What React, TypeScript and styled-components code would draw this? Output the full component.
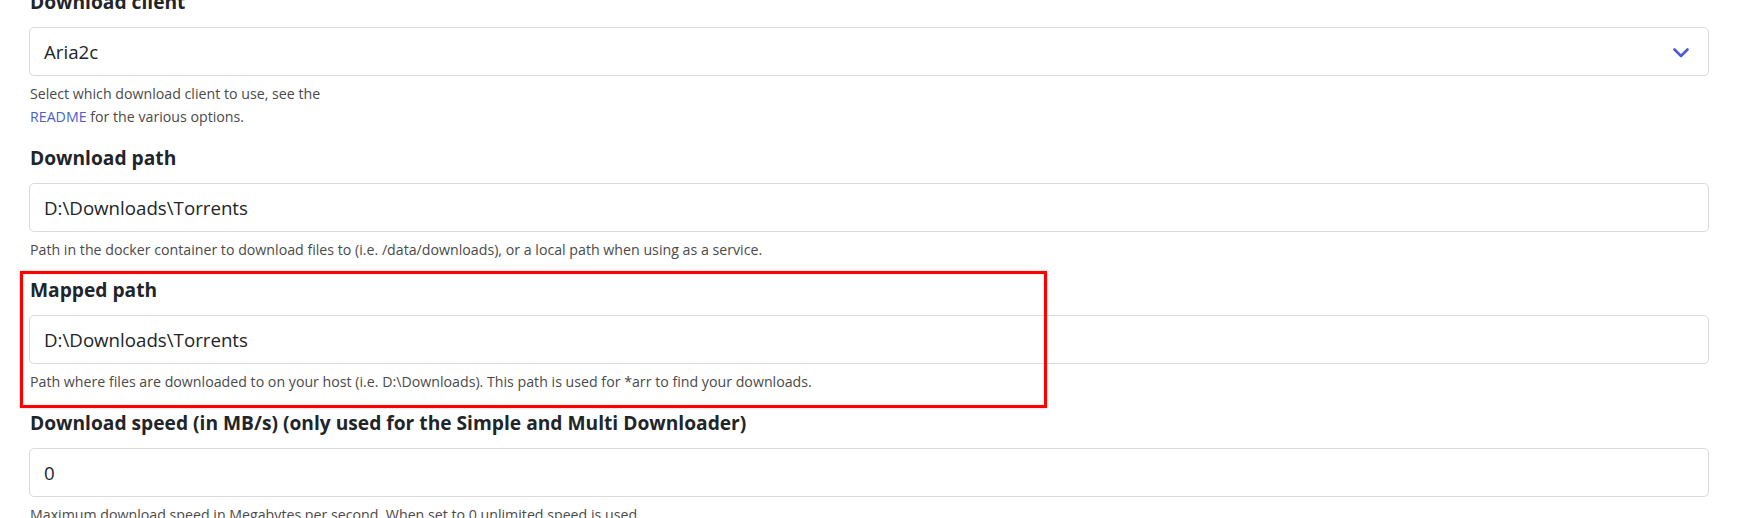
import React from "react";
import styled, { createGlobalStyle } from "styled-components";

const Global = createGlobalStyle`
  html, body {
    margin: 0;
    padding: 0;
    background: #ffffff;
  }
  body {
    font-family: "Open Sans", "Noto Sans", "Liberation Sans", sans-serif;
    color: #212529;
    -webkit-font-smoothing: antialiased;
  }
`;

const Page = styled.div`
  margin-top: -10px;
  padding: 0 37px 0 29px;
`;

const Group = styled.div`
  position: relative;
  margin-bottom: 17.5px;
`;

const Label = styled.label`
  display: block;
  font-weight: 700;
  font-size: 19.2px;
  line-height: 24px;
  margin: 0 0 13px 1px;
  color: #212529;
`;

const FieldBox = styled.div`
  position: relative;
  box-sizing: border-box;
  height: 49px;
  border: 1px solid #dadada;
  border-radius: 5px;
  background: #ffffff;
  display: flex;
  align-items: center;
  padding: 0 14px;
`;

const Value = styled.span`
  flex: 1;
  font-size: 18.7px;
  color: #212529;
  white-space: nowrap;
`;

const Chevron = styled.svg`
  width: 16px;
  height: 10px;
  margin-right: 5px;
  margin-top: 2px;
  flex: none;
`;

const Help = styled.div`
  margin-top: 6px;
  font-size: 14.2px;
  line-height: 23px;
  color: #4a4a4a;
  padding-left: 1px;
`;

const Link = styled.a`
  color: #4a5fc8;
  text-decoration: none;
`;

const Highlight = styled.div`
  position: absolute;
  left: -9px;
  top: -7.5px;
  width: 1027px;
  height: 137px;
  box-sizing: border-box;
  border: 3px solid #ff0000;
  box-shadow: 0 0 1px rgba(255, 0, 0, 0.6), inset 0 0 1px rgba(255, 0, 0, 0.6);
  pointer-events: none;
`;

type FieldProps = {
  label: string;
  value: string;
  select?: boolean;
  highlight?: boolean;
  children: React.ReactNode;
};

function Field({ label, value, select, highlight, children }: FieldProps) {
  return (
    <Group>
      <Label>{label}</Label>
      <FieldBox>
        <Value>{value}</Value>
        {select && (
          <Chevron viewBox="0 0 16 10" aria-hidden="true">
            <polyline
              points="1.5,1.5 8,8 14.5,1.5"
              fill="none"
              stroke="#4a5bd1"
              strokeWidth="2.6"
              strokeLinecap="round"
              strokeLinejoin="round"
            />
          </Chevron>
        )}
      </FieldBox>
      <Help>{children}</Help>
      {highlight && <Highlight />}
    </Group>
  );
}

export default function App() {
  return (
    <>
      <Global />
      <Page>
        <Field label="Download client" value="Aria2c" select>
          Select which download client to use, see the
          <br />
          <Link href="#">README</Link> for the various options.
        </Field>
        <Field label="Download path" value="D:\Downloads\Torrents">
          Path in the docker container to download files to (i.e. /data/downloads), or a local path when using as a
          service.
        </Field>
        <Field label="Mapped path" value="D:\Downloads\Torrents" highlight>
          Path where files are downloaded to on your host (i.e. D:\Downloads). This path is used for *arr to find your
          downloads.
        </Field>
        <Field label="Download speed (in MB/s) (only used for the Simple and Multi Downloader)" value="0">
          Maximum download speed in Megabytes per second. When set to 0 unlimited speed is used.
        </Field>
      </Page>
    </>
  );
}
